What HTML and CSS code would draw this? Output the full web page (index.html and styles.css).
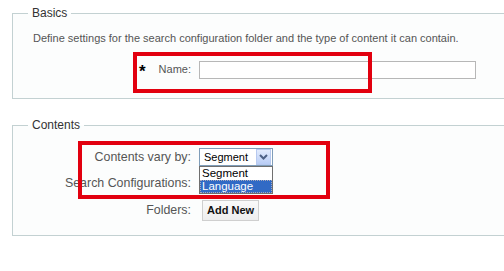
FILE: index.html
```html
<!DOCTYPE html>
<html>
<head>
<meta charset="utf-8">
<link rel="stylesheet" href="styles.css">
</head>
<body>
<fieldset class="group basics">
  <legend>Basics</legend>
  <p class="desc">Define settings for the search configuration folder and the type of content it can contain.</p>
  <div class="form">
    <label class="lbl"><span class="req">*</span>Name:</label>
    <div class="ctl"><span class="input"></span></div>
  </div>
</fieldset>
<fieldset class="group contents">
  <legend>Contents</legend>
  <div class="form rows">
    <label class="lbl">Contents vary by:</label>
    <div class="ctl">
      <div class="select">
        <span class="sel-text">Segment</span>
        <span class="sel-btn"><svg width="9" height="6" viewBox="0 0 9 6"><path d="M1 1 L4.5 4.5 L8 1" fill="none" stroke="#4d6185" stroke-width="2"/></svg></span>
        <div class="dropdown">
          <div class="opt">Segment</div>
          <div class="opt active">Language</div>
        </div>
      </div>
    </div>
    <label class="lbl">Search Configurations:</label>
    <div class="ctl"></div>
    <label class="lbl">Folders:</label>
    <div class="ctl"><span class="btn">Add New</span></div>
  </div>
</fieldset>
<div class="mark mark1"></div>
<div class="mark mark2"></div>
</body>
</html>
```

FILE: styles.css
```css
html, body {
  margin: 0;
  padding: 0;
  background: #ffffff;
  width: 504px;
  height: 271px;
  overflow: hidden;
  font-family: "Liberation Sans", Arial, sans-serif;
  position: relative;
}

.group {
  margin: 6px 0 0 12px;
  padding: 0 0 0 15px;
  border: 1px solid #c3d1d2;
  border-right: none;
  background: #fcfdfd;
  min-width: 0;
}

.group legend {
  padding: 0 4px;
  font-size: 12px;
  line-height: 14px;
  color: #333;
}

.basics {
  padding-top: 11px;
  padding-bottom: 19px;
}

.contents {
  margin-top: 19px;
  padding-top: 16px;
  padding-bottom: 15px;
}

.desc {
  margin: 0 0 0 5px;
  font-size: 11px;
  line-height: 14px;
  color: #555;
}

.form {
  display: grid;
  grid-template-columns: 163px auto;
  column-gap: 8px;
  align-items: center;
  margin-top: 16px;
}

.form.rows {
  margin-top: 0;
  grid-template-rows: 18px 20px 20px;
  row-gap: 7px;
}

.lbl {
  text-align: right;
  font-size: 12.4px;
  color: #555;
  line-height: 14px;
  white-space: nowrap;
}

.basics .lbl {
  font-size: 11px;
}

.req {
  font-size: 17px;
  font-weight: bold;
  color: #000;
  margin-right: 13px;
  vertical-align: -4px;
}

.ctl {
  display: flex;
  align-items: center;
}

.input {
  display: block;
  width: 275px;
  height: 16px;
  border: 1px solid #b7b7b7;
  background: #fff;
}

.select {
  position: relative;
  width: 72px;
  height: 16px;
  border: 1px solid #7f9db9;
  background: #fff;
  display: flex;
  align-items: center;
}

.sel-text {
  font-size: 11px;
  color: #000;
  padding-left: 4px;
  flex: 1;
}

.sel-btn {
  width: 15px;
  height: 16px;
  margin-right: 1px;
  background: linear-gradient(#e2ebfd, #b9cdf6);
  border: 1px solid #b7c9ef;
  box-sizing: border-box;
  display: flex;
  align-items: center;
  justify-content: center;
}

.dropdown {
  position: absolute;
  left: -1px;
  top: 17px;
  width: 72px;
  border: 1px solid #6f6f6f;
  background: #fff;
}

.opt {
  font-size: 11.5px;
  line-height: 13px;
  padding: 0 2px;
  color: #000;
}

.opt.active {
  background: #316ac5;
  color: #fff;
  outline: 1px dotted #aab;
  outline-offset: -1px;
}

.btn {
  display: inline-block;
  margin-left: 3px;
  padding: 0 4px;
  height: 19px;
  line-height: 19px;
  font-size: 11px;
  font-weight: bold;
  color: #111;
  background: linear-gradient(#fafafa, #eeeeee);
  border: 1px solid #cfcfcf;
}

.mark {
  position: absolute;
  border: 4px solid #e2000f;
  box-sizing: border-box;
}

.mark1 {
  left: 133px;
  top: 52px;
  width: 239px;
  height: 41px;
}

.mark2 {
  left: 78px;
  top: 141px;
  width: 252px;
  height: 58px;
}
```
